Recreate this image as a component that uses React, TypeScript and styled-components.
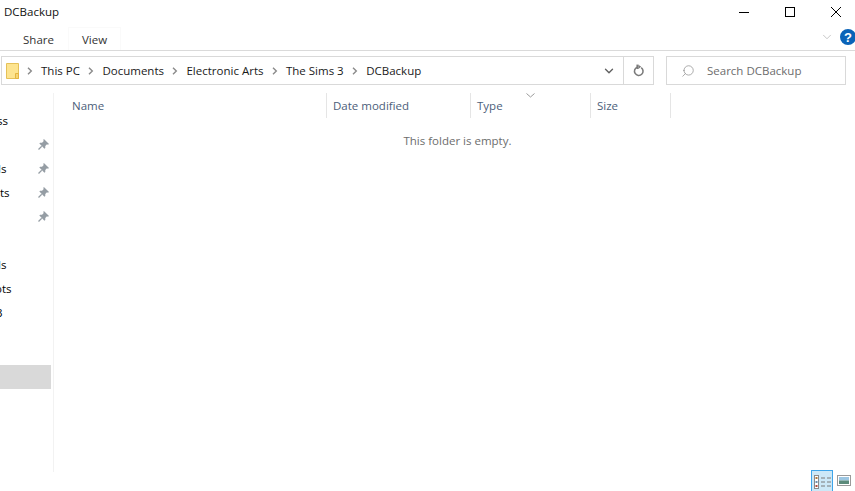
import React from 'react';
import styled, { createGlobalStyle } from 'styled-components';
import { ChevronDown, Search } from 'lucide-react';

const GlobalStyle = createGlobalStyle`
  html, body {
    margin: 0;
    padding: 0;
    height: 100%;
    overflow: hidden;
    background: #fff;
  }
  body {
    font-family: 'Open Sans', 'Noto Sans', 'Liberation Sans', sans-serif;
    font-size: 11.5px;
    color: #000;
  }
`;

const Window = styled.div`
  width: 855px;
  height: 491px;
  display: flex;
  flex-direction: column;
  overflow: hidden;
  background: #fff;
  position: relative;
`;

const TitleBar = styled.div`
  height: 24px;
  flex: none;
  display: flex;
  align-items: center;
  padding-left: 4px;
`;

const Title = styled.div`
  flex: 1;
  color: #111;
  padding-bottom: 1px;
`;

const WindowButton = styled.div`
  width: 46px;
  height: 24px;
  flex: none;
  display: flex;
  align-items: center;
  justify-content: center;
  position: relative;
  left: 4px;
`;

const Ribbon = styled.div`
  height: 27px;
  flex: none;
  display: flex;
  align-items: stretch;
  gap: 3px;
  border-bottom: 1px solid #dadada;
  box-sizing: border-box;
  padding-left: 12px;
`;

const RibbonTab = styled.div<{ $active?: boolean }>`
  width: 53px;
  margin-top: 3px;
  display: flex;
  align-items: center;
  justify-content: center;
  color: #333;
  box-sizing: border-box;
  border: 1px solid ${p => (p.$active ? '#fafafa' : 'transparent')};
  border-bottom: none;
`;

const RibbonRight = styled.div`
  margin-left: auto;
  display: flex;
  align-items: center;
  gap: 6px;
  color: #b0b0b0;
`;

const NavRow = styled.div`
  height: 29px;
  margin-top: 5px;
  flex: none;
  display: flex;
  padding: 0 9px 0 1px;
  gap: 12px;
`;

const AddressBox = styled.div`
  width: 653px;
  flex: none;
  box-sizing: border-box;
  border: 1px solid #d9d9d9;
  display: flex;
  align-items: center;
  padding-left: 4px;
`;

const Crumb = styled.span`
  color: #1a1a1a;
  white-space: nowrap;
`;

const CrumbArrow = styled.span`
  width: 22.5px;
  flex: none;
  display: flex;
  align-items: center;
  justify-content: center;
`;

const FolderIcon = styled.svg`
  flex: none;
  margin-right: -0.5px;
`;

const AddressEnd = styled.div`
  margin-left: auto;
  display: flex;
  align-items: center;
  height: 100%;
`;

const DropButton = styled.div`
  width: 28px;
  display: flex;
  align-items: center;
  justify-content: center;
  color: #606060;
`;

const RefreshButton = styled.div`
  width: 29px;
  height: 100%;
  border-left: 1px solid #d9d9d9;
  display: flex;
  align-items: center;
  justify-content: center;
`;

const SearchBox = styled.div`
  flex: 1;
  box-sizing: border-box;
  border: 1px solid #d9d9d9;
  display: flex;
  align-items: center;
  gap: 12px;
  padding-left: 14px;
  color: #6d6d6d;
`;

const SearchIcon = styled(Search)`
  transform: scaleX(-1);
  color: #8a8a8a;
`;

const Body = styled.div`
  flex: 1;
  display: flex;
  min-height: 0;
  padding-top: 8px;
`;

const Sidebar = styled.div`
  width: 54px;
  flex: none;
  box-sizing: border-box;
  height: 379px;
  border-right: 1px solid #f2f2f2;
  padding: 16px 2px 0 0;
`;

const NavItem = styled.div<{ $selected?: boolean; $gapTop?: boolean }>`
  height: 24px;
  box-sizing: border-box;
  padding: 0 2px 1px 0;
  display: flex;
  align-items: center;
  justify-content: space-between;
  margin-top: ${p => (p.$gapTop ? '16px' : '0')};
  background: ${p => (p.$selected ? '#d9d9d9' : 'transparent')};
`;

// the window is cut off on the left, so sidebar labels hang past the edge
const NavLabel = styled.span<{ $clip: number }>`
  margin-left: ${p => -p.$clip}px;
  white-space: nowrap;
  color: #000;
`;

const PinSlot = styled.span`
  margin-left: auto;
  display: flex;
`;

const Main = styled.div`
  flex: 1;
  display: flex;
  flex-direction: column;
  min-width: 0;
`;

const HeaderRow = styled.div`
  height: 25px;
  flex: none;
  display: flex;
  position: relative;
`;

const HeaderCell = styled.div<{ $width: number }>`
  width: ${p => p.$width}px;
  flex: none;
  box-sizing: border-box;
  display: flex;
  align-items: center;
  padding: 0 0 1px 6px;
  color: #4c607a;
  border-right: 1px solid #e5e5e5;
`;

const NameCell = styled(HeaderCell)`
  padding-left: 18px;
`;

const SortCaret = styled.svg`
  position: absolute;
  left: 472px;
  top: 0;
`;

const Empty = styled.div`
  margin-top: 15px;
  text-align: center;
  color: #6d6d6d;
  width: 807px;
`;

const StatusBar = styled.div`
  position: absolute;
  right: 2px;
  bottom: 0;
  display: flex;
  gap: 2px;
`;

const ViewToggle = styled.div<{ $active?: boolean }>`
  width: ${p => (p.$active ? '22px' : '18px')};
  height: 21px;
  box-sizing: border-box;
  padding-top: 4px;
  display: flex;
  align-items: flex-start;
  justify-content: center;
  border: ${p => (p.$active ? '1px solid #3ea5ea' : '1px solid transparent')};
  border-bottom: none;
  background: ${p => (p.$active ? '#cce8f7' : 'transparent')};
`;

const Arrow = () => (
  <svg width="6" height="8" viewBox="0 0 6 8">
    <path d="M1 .8 4.3 4 1 7.2" fill="none" stroke="#8a8a8a" strokeWidth="1.4" />
  </svg>
);

const Pin = () => (
  <svg width="11" height="11" viewBox="0 0 13 13">
    <path d="M7 0 13 6 11.8 6.8 10.6 6.2 8.6 8.2 8.6 10.6 7.6 11.4 1.6 5.4 2.4 4.4 4.8 4.4 6.8 2.4 6.2 1.2Z" fill="#959da4" />
    <path d="M4.4 8.6 .6 12.4" stroke="#959da4" strokeWidth="1.4" />
  </svg>
);

const Folder = () => (
  <FolderIcon width="13" height="16" viewBox="0 0 13 16">
    <path d="M.5.5H12.5V15.5H.5Z" fill="#fde48f" stroke="#e5c158" />
    <path d="M9.5 10.5H12.5V15.5H9.5Z" fill="#f5d575" stroke="#e5b53f" />
  </FolderIcon>
);

const Refresh = () => (
  <svg width="12" height="13" viewBox="0 0 14 15">
    <path d="M9.6 4.2A5 5 0 1 1 5 3.6" fill="none" stroke="#7a7a7a" strokeWidth="1.8" />
    <path d="M4 .6H6.6V5.8H4Z" fill="#7a7a7a" />
    <path d="M6.6 1 9.6 3.2 6.6 5.4Z" fill="#7a7a7a" />
  </svg>
);

const DetailsIcon = () => (
  <svg width="17" height="14" viewBox="0 0 17 14">
    <rect x=".5" y=".5" width="4" height="13" fill="#fff" stroke="#8a8a8a" />
    <rect x="1.5" y="2" width="2" height="2" fill="#b0793a" />
    <rect x="1.5" y="6" width="2" height="2" fill="#6b8fb0" />
    <rect x="1.5" y="10" width="2" height="2" fill="#b04a3a" />
    <path d="M7 3H11M13 3H17M7 7H11M13 7H17M7 11H11M13 11H17" stroke="#7a7a7a" />
  </svg>
);

const PreviewIcon = () => (
  <svg width="14" height="11" viewBox="0 0 14 11">
    <rect x=".5" y=".5" width="13" height="10" fill="#fff" stroke="#9a9a9a" />
    <rect x="2" y="2" width="10" height="3.5" fill="#9cc6e2" />
    <rect x="2" y="5.5" width="10" height="3.5" fill="#5b8a7a" />
  </svg>
);

const crumbs = ['This PC', 'Documents', 'Electronic Arts', 'The Sims 3', 'DCBackup'];

const navItems = [
  { label: 'ss', clip: 3 },
  { label: '', clip: 0, pinned: true },
  { label: 'ls', clip: 2, pinned: true },
  { label: 'ts', clip: 0, pinned: true },
  { label: '', clip: 0, pinned: true },
  { label: '', clip: 0 },
  { label: 'ls', clip: 2 },
  { label: 'ots', clip: 5 },
  { label: '3', clip: 4 },
  { label: '', clip: 0 }
];

const columns = [
  { title: 'Date modified', width: 144 },
  { title: 'Type', width: 120 },
  { title: 'Size', width: 80 }
];

export default function App() {
  return (
    <Window>
      <GlobalStyle />
      <TitleBar>
        <Title>DCBackup</Title>
        <WindowButton>
          <svg width="10" height="1"><path d="M0 .5H10" stroke="#000" /></svg>
        </WindowButton>
        <WindowButton>
          <svg width="10" height="10"><rect x=".5" y=".5" width="9" height="9" fill="none" stroke="#000" /></svg>
        </WindowButton>
        <WindowButton>
          <svg width="10" height="10"><path d="M0 0 10 10M10 0 0 10" stroke="#000" /></svg>
        </WindowButton>
      </TitleBar>
      <Ribbon>
        <RibbonTab>Share</RibbonTab>
        <RibbonTab $active>View</RibbonTab>
        <RibbonRight>
          <ChevronDown size={14} strokeWidth={1.2} />
          <svg width="15" height="16" viewBox="0 0 15 16">
            <circle cx="8" cy="8" r="8" fill="#0a63b8" />
            <text x="8" y="12.5" textAnchor="middle" fontSize="13" fontWeight="700" fontFamily="Liberation Sans" fill="#fff">?</text>
          </svg>
        </RibbonRight>
      </Ribbon>
      <NavRow>
        <AddressBox>
          <Folder />
          {crumbs.map(c => (
            <React.Fragment key={c}>
              <CrumbArrow><Arrow /></CrumbArrow>
              <Crumb>{c}</Crumb>
            </React.Fragment>
          ))}
          <AddressEnd>
            <DropButton><ChevronDown size={14} strokeWidth={2.4} /></DropButton>
            <RefreshButton><Refresh /></RefreshButton>
          </AddressEnd>
        </AddressBox>
        <SearchBox>
          <SearchIcon size={14} strokeWidth={1.2} />
          <span>Search DCBackup</span>
        </SearchBox>
      </NavRow>
      <Body>
        <Sidebar>
          {navItems.map((item, i) => (
            <NavItem key={i}>
              {item.label && <NavLabel $clip={item.clip}>{item.label}</NavLabel>}
              {item.pinned && <PinSlot><Pin /></PinSlot>}
            </NavItem>
          ))}
          <NavItem $selected $gapTop />
        </Sidebar>
        <Main>
          <HeaderRow>
            <NameCell $width={273}>Name</NameCell>
            {columns.map(c => (
              <HeaderCell key={c.title} $width={c.width}>{c.title}</HeaderCell>
            ))}
            <SortCaret width="9" height="5" viewBox="0 0 9 5">
              <path d="M.5.5 4.5 4 8.5.5" fill="none" stroke="#9a9a9a" />
            </SortCaret>
          </HeaderRow>
          <Empty>This folder is empty.</Empty>
        </Main>
      </Body>
      <StatusBar>
        <ViewToggle $active><DetailsIcon /></ViewToggle>
        <ViewToggle><PreviewIcon /></ViewToggle>
      </StatusBar>
    </Window>
  );
}
